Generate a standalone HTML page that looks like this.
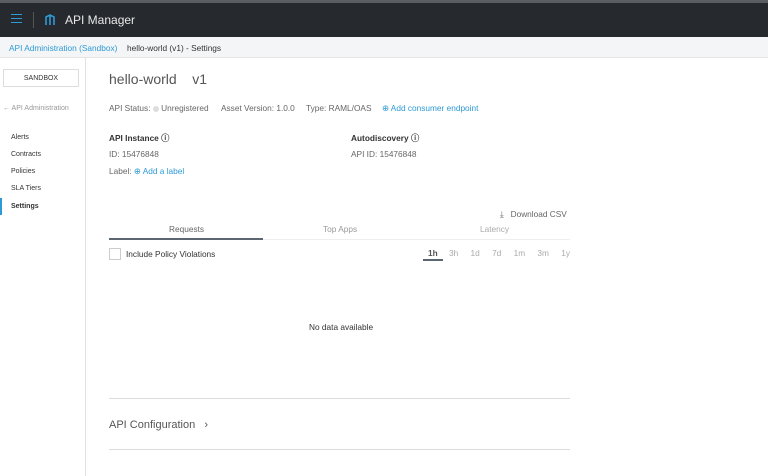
<!DOCTYPE html><html><head><style>
body{margin:0;width:768px;height:476px;overflow:hidden;font-family:"Liberation Sans",sans-serif;font-size:8.3px;color:#333;background:#fff;position:relative}
.a{position:absolute;white-space:nowrap}
.blue{color:#2d9ad6}
.g{color:#666}
</style></head><body>
<div class="a" style="left:0;top:0;width:768px;height:3px;background:#5a5e62"></div>
<div class="a" style="left:0;top:3px;width:768px;height:34px;background:#262a2e"></div>
<div class="a" style="left:11px;top:14px;width:11px;height:1px;background:#2d9ad6;box-shadow:0 4px 0 #2d9ad6,0 8px 0 #2d9ad6"></div>
<div class="a" style="left:33px;top:12px;width:1px;height:16px;background:#555"></div>
<svg class="a" style="left:44px;top:13px" width="12" height="14" viewBox="0 0 12 14"><path d="M2 12V4l4-2 4 2v8M6 2v10" fill="none" stroke="#2d9ad6" stroke-width="1.6"/></svg>
<div class="a" style="left:65px;top:13px;font-size:12px;color:#e8e8e8">API Manager</div>
<div class="a" style="left:0;top:37px;width:768px;height:20px;background:#f4f5f6;border-bottom:1px solid #e4e4e4"></div>
<div class="a blue" style="left:9px;top:43px">API Administration (Sandbox)</div>
<div class="a" style="left:127px;top:43px;color:#333">hello-world (v1) - Settings</div>
<div class="a" style="left:85px;top:58px;width:1px;height:418px;background:#e2e2e2"></div>
<div class="a" style="left:3px;top:69px;width:76px;height:18px;border:1px solid #ddd;box-sizing:border-box;text-align:center;line-height:17px;font-size:7px">SANDBOX</div>
<div class="a" style="left:3px;top:105px;color:#999;font-size:7px">← API Administration</div>
<div class="a" style="left:11px;top:134px;font-size:7px">Alerts</div>
<div class="a" style="left:11px;top:151px;font-size:7px">Contracts</div>
<div class="a" style="left:11px;top:168px;font-size:7px">Policies</div>
<div class="a" style="left:11px;top:185px;font-size:7px">SLA Tiers</div>
<div class="a" style="left:0;top:198px;width:2px;height:17px;background:#2d9ad6"></div>
<div class="a" style="left:11px;top:203px;font-size:7px;font-weight:bold">Settings</div>
<div class="a" style="left:109px;top:71px;font-size:14px;color:#555">hello-world &nbsp;&nbsp;&nbsp;v1</div>
<div class="a g" style="left:109px;top:103px">API Status: <span style="display:inline-block;width:6px;height:6px;border-radius:50%;background:#ddd;vertical-align:-1px"></span> Unregistered</div>
<div class="a g" style="left:221px;top:103px">Asset Version: 1.0.0</div>
<div class="a g" style="left:306px;top:103px">Type: RAML/OAS</div>
<div class="a blue" style="left:382px;top:103px">⊕ Add consumer endpoint</div>
<div class="a" style="left:109px;top:132px;font-weight:bold">API Instance ⓘ</div>
<div class="a" style="left:351px;top:132px;font-weight:bold">Autodiscovery ⓘ</div>
<div class="a g" style="left:109px;top:149px">ID: 15476848</div>
<div class="a g" style="left:351px;top:149px">API ID: 15476848</div>
<div class="a g" style="left:109px;top:166px">Label: <span class="blue">⊕ Add a label</span></div>
<div class="a g" style="left:500px;top:209px">⤓ &nbsp;&nbsp;Download CSV</div>
<div class="a g" style="left:169px;top:224px">Requests</div>
<div class="a" style="left:323px;top:224px;color:#999">Top Apps</div>
<div class="a" style="left:480px;top:224px;color:#aaa">Latency</div>
<div class="a" style="left:109px;top:239px;width:461px;height:1px;background:#eee"></div>
<div class="a" style="left:109px;top:238px;width:154px;height:2px;background:#5c6670"></div>
<div class="a" style="left:109px;top:248px;width:10px;height:10px;border:1px solid #ccc"></div>
<div class="a" style="left:126px;top:249px">Include Policy Violations</div>
<div class="a" style="left:428px;top:248px;font-weight:bold;color:#555">1h</div>
<div class="a" style="left:423px;top:259px;width:20px;height:2px;background:#5c6670"></div>
<div class="a" style="left:449px;top:248px;color:#aaa;word-spacing:10px">3h 1d 7d 1m 3m 1y</div>
<div class="a" style="left:309px;top:322px">No data available</div>
<div class="a" style="left:109px;top:398px;width:461px;height:1px;background:#ddd"></div>
<div class="a" style="left:109px;top:419px;font-size:11px;color:#555">API Configuration &nbsp;&nbsp;›</div>
<div class="a" style="left:109px;top:449px;width:461px;height:1px;background:#ddd"></div>
</body></html>
